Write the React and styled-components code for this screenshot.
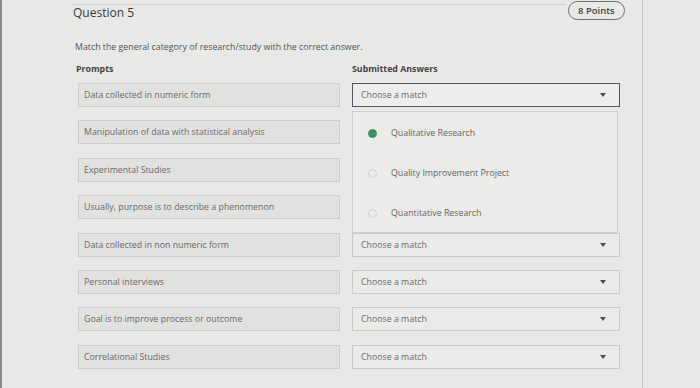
import React from 'react'
import styled, { createGlobalStyle } from 'styled-components'

const prompts = [
  'Data collected in numeric form',
  'Manipulation of data with statistical analysis',
  'Experimental Studies',
  'Usually, purpose is to describe a phenomenon',
  'Data collected in non numeric form',
  'Personal interviews',
  'Goal is to improve process or outcome',
  'Correlational Studies',
]

const options = [
  { label: 'Qualitative Research', checked: true },
  { label: 'Quality Improvement Project', checked: false },
  { label: 'Quantitative Research', checked: false },
]

// rows whose answer cell sits under the open menu
const covered = [1, 2, 3]

const GlobalStyle = createGlobalStyle`
  body {
    margin: 0;
    background: #e8e8e6;
    font-family: "Open Sans", "DejaVu Sans", sans-serif;
  }
`

const Page = styled.div`
  width: 700px;
  height: 388px;
  overflow: hidden;
  display: flex;
  border-left: 2px solid #8a8a8a;
  box-sizing: border-box;
`

const Card = styled.div`
  width: 641px;
  border-right: 1px solid #c8c8c8;
  padding-left: 69px;
  box-sizing: border-box;
`

const Header = styled.div`
  display: flex;
  align-items: flex-start;
  padding-top: 1px;
  height: 20px;
`

const HeaderMain = styled.div`
  width: 495px;
  margin-top: 3px;
  border-top: 1px solid #d0d0d0;
`

const Title = styled.h2`
  margin: 0 0 0 2px;
  font-size: 12px;
  font-weight: 500;
  color: #3a3a3a;
  line-height: 16px;
`

const Pill = styled.div`
  margin-left: 2px;
  height: 17px;
  padding: 0 9px;
  border: 1px solid #707070;
  border-radius: 10px;
  font-size: 9.5px;
  font-weight: 600;
  color: #444;
  line-height: 17px;
`

const Instruction = styled.p`
  margin: 20px 0 0 4px;
  font-size: 8.8px;
  color: #555;
  line-height: 12px;
`

const HeadRow = styled.div`
  display: grid;
  grid-template-columns: 276px 1fr;
  height: 14px;
  margin: 9px 0 0 5px;
`

const ColumnHead = styled.div`
  font-size: 8.8px;
  font-weight: 700;
  color: #454545;
  line-height: 14px;
`

const Grid = styled.div`
  display: grid;
  grid-template-columns: 262px 268px;
  grid-auto-rows: 24px;
  column-gap: 12px;
  row-gap: 13.4px;
  margin: 7px 0 0 7px;
`

const Prompt = styled.div`
  grid-column: 1;
  grid-row: ${p => p.$row};
  display: flex;
  align-items: center;
  padding-left: 5px;
  background: #e1e1e0;
  border: 1px solid #cdcdcc;
  font-size: 8.8px;
  color: #6a6a6a;
`

const Select = styled.div`
  grid-column: 2;
  grid-row: ${p => p.$row};
  display: flex;
  align-items: center;
  justify-content: space-between;
  padding: 0 13px 0 8px;
  background: ${p => (p.$open ? '#ededec' : '#eaeae9')};
  border: ${p => (p.$open ? '1.5px solid #55556a' : '1px solid #cbcbca')};
  font-size: 8.8px;
  color: #6a6a6a;
`

const Caret = styled.span`
  width: 0;
  height: 0;
  border-left: 3.5px solid transparent;
  border-right: 3.5px solid transparent;
  border-top: 4px solid #4e4e4e;
`

const Menu = styled.div`
  grid-column: 2;
  grid-row: 2 / span 3;
  align-self: start;
  margin: -9.4px 2px 0 0;
  height: 122px;
  box-sizing: border-box;
  background: #ebebea;
  border: 1px solid #cfcfce;
  padding-top: 1px;
`

const Option = styled.div`
  display: flex;
  align-items: center;
  height: 40px;
  padding-left: 15px;
  font-size: 8.8px;
  color: #666;
`

const Radio = styled.span`
  width: 9px;
  height: 9px;
  border-radius: 50%;
  margin-right: 14px;
  box-sizing: border-box;
  background: ${p => (p.$checked ? '#3f8f64' : 'transparent')};
  border: ${p => (p.$checked ? '1px solid #3f8f64' : '1px solid #d0d0cf')};
`

export default function App() {
  return (
    <>
      <GlobalStyle />
      <Page>
        <Card>
          <Header>
            <HeaderMain>
              <Title>Question 5</Title>
            </HeaderMain>
            <Pill>8 Points</Pill>
          </Header>
          <Instruction>Match the general category of research/study with the correct answer.</Instruction>
          <HeadRow>
            <ColumnHead>Prompts</ColumnHead>
            <ColumnHead>Submitted Answers</ColumnHead>
          </HeadRow>
          <Grid>
            {prompts.map((text, i) => (
              <React.Fragment key={text}>
                <Prompt $row={i + 1}>{text}</Prompt>
                {!covered.includes(i) && (
                  <Select $row={i + 1} $open={i === 0}>
                    <span>Choose a match</span>
                    <Caret />
                  </Select>
                )}
              </React.Fragment>
            ))}
            <Menu>
              {options.map(o => (
                <Option key={o.label}>
                  <Radio $checked={o.checked} />
                  {o.label}
                </Option>
              ))}
            </Menu>
          </Grid>
        </Card>
      </Page>
    </>
  )
}
